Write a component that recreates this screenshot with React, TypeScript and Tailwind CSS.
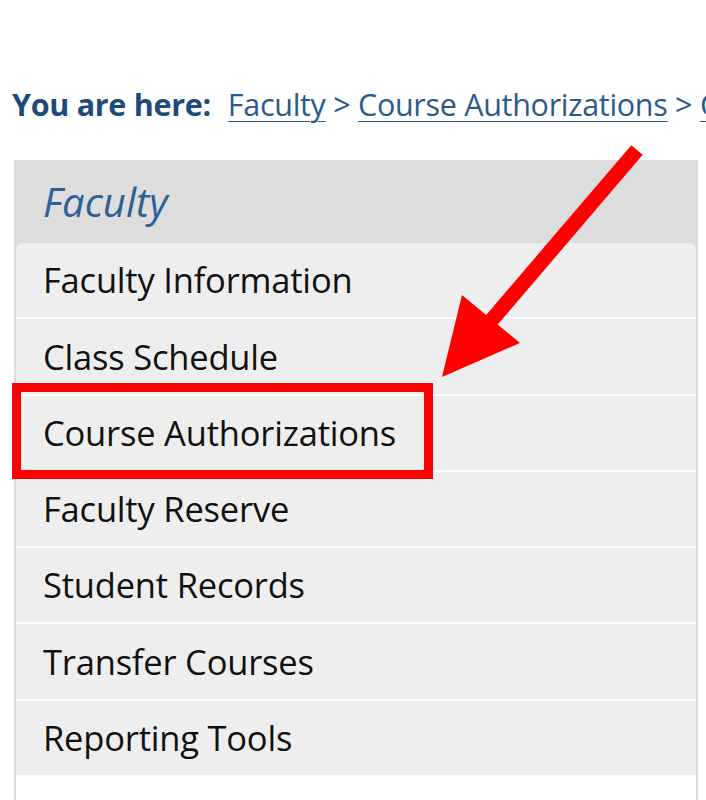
const items = [
  'Faculty Information',
  'Class Schedule',
  'Course Authorizations',
  'Faculty Reserve',
  'Student Records',
  'Transfer Courses',
  'Reporting Tools',
];

export default function App() {
  return (
    <div
      className="relative w-[706px] h-[800px] overflow-hidden bg-white"
      style={{ fontFamily: '"Open Sans", "Noto Sans", sans-serif' }}
    >
      <div className="pt-[84px] pl-[12px] text-[30.5px] leading-[40px] whitespace-nowrap text-[#2b5a8a] tracking-[-0.3px]">
        <span className="font-bold text-[#1d4a78]">You are here:</span>
        <span className="ml-[17px] underline underline-offset-[5px] decoration-1">Faculty</span>
        <span> &gt; </span>
        <span className="underline underline-offset-[5px] decoration-1">Course Authorizations</span>
        <span> &gt; </span>
        <span className="underline underline-offset-[5px] decoration-1">Course Authorization Request</span>
      </div>

      <div className="mt-[36px] ml-[14px] w-[684px] h-[700px] bg-[#dddddd] px-[2px]">
        <div className="h-[83px] flex items-center pl-[27px] text-[40px] italic text-[#2e6193]">
          Faculty
        </div>
        <div className="rounded-t-[8px] bg-white flex flex-col gap-[2px] overflow-hidden h-full">
          {items.map((item) => (
            <div
              key={item}
              className="h-[74.3px] shrink-0 flex items-center pl-[27px] bg-[#eeeeee] text-[34.5px] text-[#111111] tracking-[-0.2px]"
            >
              {item}
            </div>
          ))}
        </div>
      </div>

      <svg
        className="absolute inset-0 pointer-events-none"
        width="706"
        height="800"
        viewBox="0 0 706 800"
      >
        <rect x="16.5" y="387.5" width="412" height="87" fill="none" stroke="#ff0000" strokeWidth="9" />
        <line x1="637" y1="150" x2="490" y2="322" stroke="#ff0000" strokeWidth="15" />
        <polygon points="442,377 462,295 520,343" fill="#ff0000" />
      </svg>
    </div>
  );
}
